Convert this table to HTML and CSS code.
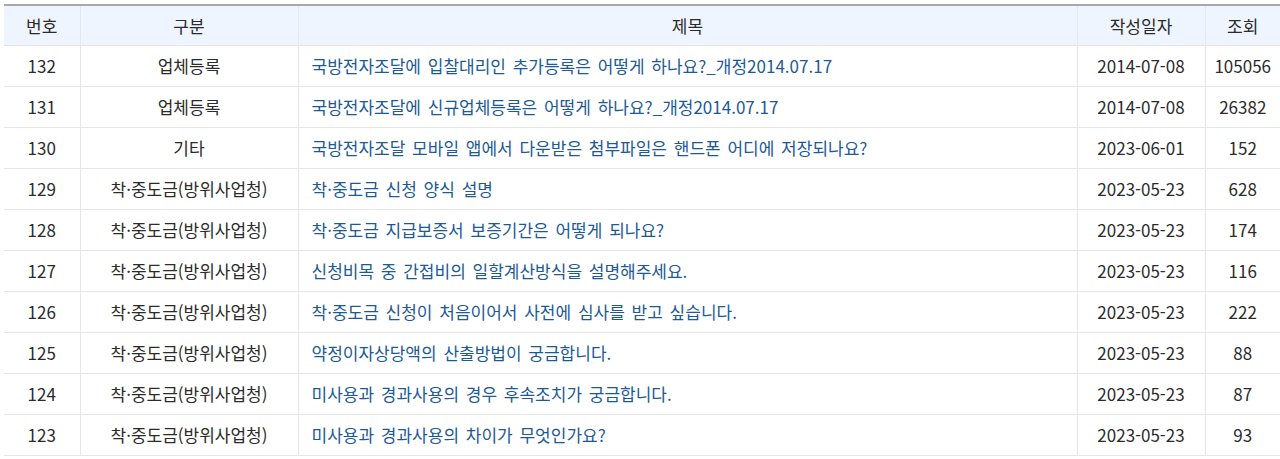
FILE: index.html
```html
<!DOCTYPE html>
<html lang="ko">
<head>
<meta charset="utf-8">
<link rel="stylesheet" href="styles.css">
</head>
<body>
<table class="board">
  <colgroup>
    <col class="c-no"><col class="c-cat"><col class="c-title"><col class="c-date"><col class="c-view">
  </colgroup>
  <thead>
    <tr><th>번호</th><th>구분</th><th>제목</th><th>작성일자</th><th>조회</th></tr>
  </thead>
  <tbody>
    <tr><td>132</td><td>업체등록</td><td class="title"><a href="#">국방전자조달에 입찰대리인 추가등록은 어떻게 하나요?_개정2014.07.17</a></td><td>2014-07-08</td><td>105056</td></tr>
    <tr><td>131</td><td>업체등록</td><td class="title"><a href="#">국방전자조달에 신규업체등록은 어떻게 하나요?_개정2014.07.17</a></td><td>2014-07-08</td><td>26382</td></tr>
    <tr><td>130</td><td>기타</td><td class="title"><a href="#">국방전자조달 모바일 앱에서 다운받은 첨부파일은 핸드폰 어디에 저장되나요?</a></td><td>2023-06-01</td><td>152</td></tr>
    <tr><td>129</td><td>착·중도금(방위사업청)</td><td class="title"><a href="#">착·중도금 신청 양식 설명</a></td><td>2023-05-23</td><td>628</td></tr>
    <tr><td>128</td><td>착·중도금(방위사업청)</td><td class="title"><a href="#">착·중도금 지급보증서 보증기간은 어떻게 되나요?</a></td><td>2023-05-23</td><td>174</td></tr>
    <tr><td>127</td><td>착·중도금(방위사업청)</td><td class="title"><a href="#">신청비목 중 간접비의 일할계산방식을 설명해주세요.</a></td><td>2023-05-23</td><td>116</td></tr>
    <tr><td>126</td><td>착·중도금(방위사업청)</td><td class="title"><a href="#">착·중도금 신청이 처음이어서 사전에 심사를 받고 싶습니다.</a></td><td>2023-05-23</td><td>222</td></tr>
    <tr><td>125</td><td>착·중도금(방위사업청)</td><td class="title"><a href="#">약정이자상당액의 산출방법이 궁금합니다.</a></td><td>2023-05-23</td><td>88</td></tr>
    <tr><td>124</td><td>착·중도금(방위사업청)</td><td class="title"><a href="#">미사용과 경과사용의 경우 후속조치가 궁금합니다.</a></td><td>2023-05-23</td><td>87</td></tr>
    <tr><td>123</td><td>착·중도금(방위사업청)</td><td class="title"><a href="#">미사용과 경과사용의 차이가 무엇인가요?</a></td><td>2023-05-23</td><td>93</td></tr>
  </tbody>
</table>
</body>
</html>
```
FILE: styles.css
```css
html, body {
  margin: 0;
  padding: 0;
  background: #ffffff;
}
body {
  padding: 4px 0 0 4px;
  font-family: "Noto Sans CJK KR", "Noto Sans", sans-serif;
  font-size: 17px;
  color: #2b2b2b;
}
.board {
  width: 1276px;
  table-layout: fixed;
  border-collapse: collapse;
  border-top: 2px solid #a8a8a8;
}
.c-no { width: 76px; }
.c-cat { width: 218px; }
.c-title { width: 779px; }
.c-date { width: 128px; }
.c-view { width: 75px; }
.board th {
  height: 39px;
  padding: 0;
  background: #eef5fe;
  font-weight: normal;
  color: #2b2b2b;
  border-bottom: 1px solid #e3e6ea;
  border-left: 1px solid #e3e8ee;
  line-height: 22px;
}
.board td {
  height: 40px;
  padding: 0;
  text-align: center;
  border-bottom: 1px solid #e6e6e6;
  border-left: 1px solid #e6e6e6;
  line-height: 22px;
  white-space: nowrap;
}
.board th:first-child, .board td:first-child {
  border-left: none;
}
.board td.title {
  text-align: left;
  padding-left: 13px;
  word-spacing: 2px;
}
.board td.title a {
  color: #1c5a96;
  text-decoration: none;
}
```
